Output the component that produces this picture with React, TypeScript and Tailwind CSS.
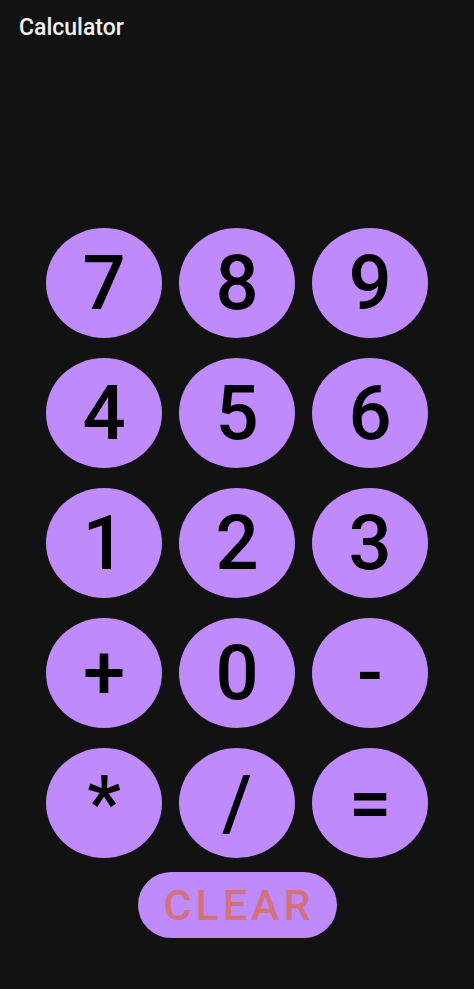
const keys = ["7", "8", "9", "4", "5", "6", "1", "2", "3", "+", "0", "-", "*", "/", "="];

export default function App() {
  return (
    <main className="min-h-[989px] w-full bg-[#121212] font-['Roboto',sans-serif]">
      <header className="px-[19px] pt-[14px]">
        <h1 className="text-[23px] leading-[28px] font-medium text-[#f2f2f2]">Calculator</h1>
      </header>

      <div className="mt-[186px] flex flex-col items-center">
        <div className="grid grid-cols-[116px_116px_116px] gap-x-[17px] gap-y-[20px]">
          {keys.map((k) => (
            <button
              key={k}
              className="flex h-[110px] w-[116px] items-center justify-center rounded-[50%] bg-[#bf8afc] text-[76px] font-medium leading-none text-black"
            >
              {k}
            </button>
          ))}
        </div>

        <button className="mt-[14px] flex h-[66px] w-[199px] items-center justify-center rounded-full bg-[#bf8afc] pl-[4px] text-[43px] font-medium tracking-[4px] text-[#d3717c]">
          CLEAR
        </button>
      </div>
    </main>
  );
}
